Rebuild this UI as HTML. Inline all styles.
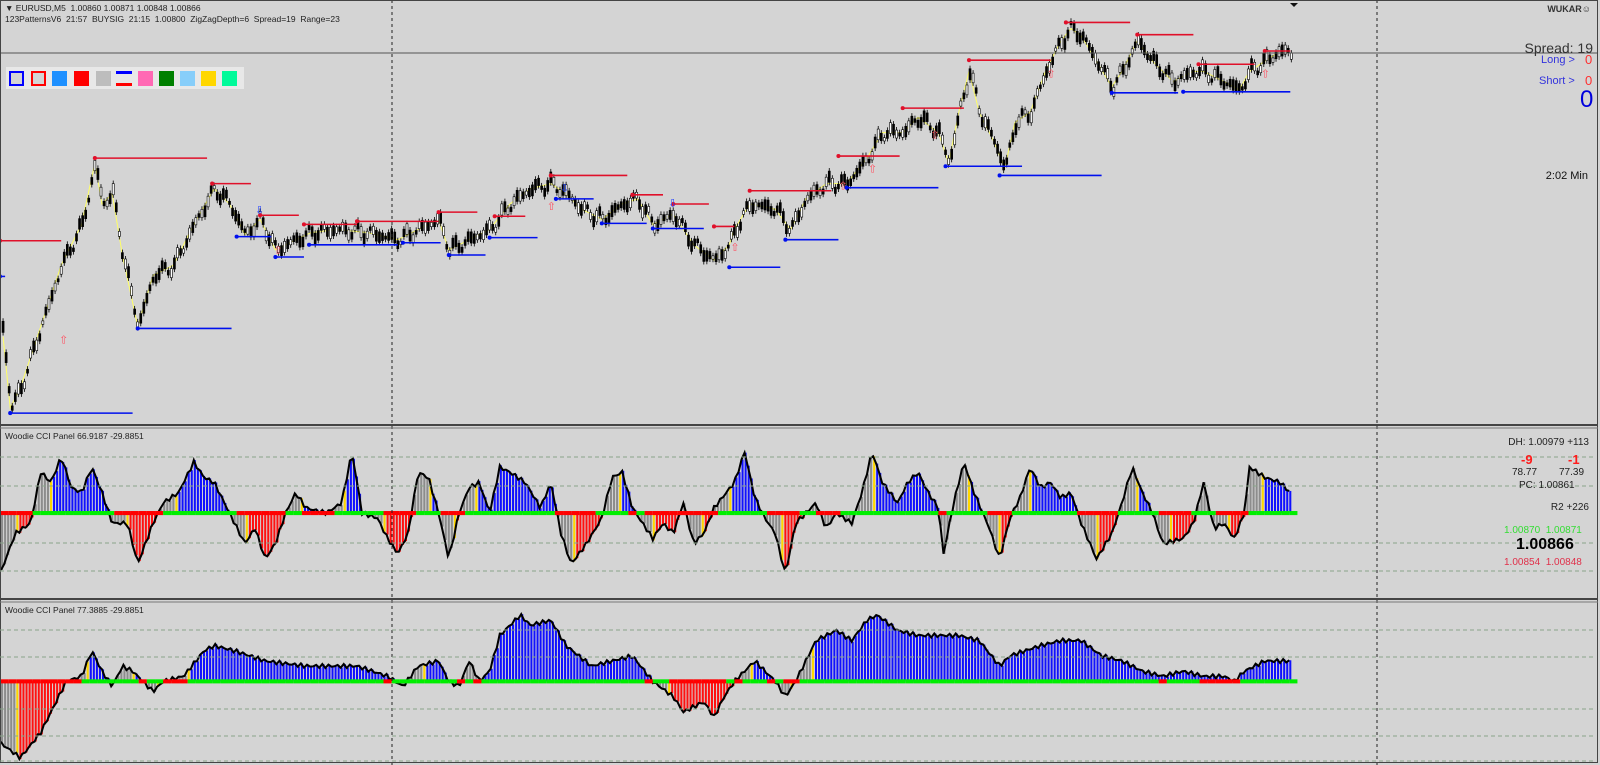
<!DOCTYPE html>
<html><head><meta charset="utf-8"><style>
html,body{margin:0;padding:0;background:#d4d4d4;width:1600px;height:765px;overflow:hidden;font-family:"Liberation Sans",sans-serif}
.t{position:absolute;white-space:nowrap;font-size:9px;color:#222}
</style></head><body>
<svg id="s" width="1600" height="765" style="position:absolute;left:0;top:0">
<rect x="0" y="0" width="1600" height="765" fill="#d4d4d4"/>
<g id="g" transform="scale(1.02)"></g>
<line x1="0" y1="53" x2="1598" y2="53" stroke="#555" stroke-width="1"/>
<line x1="392" y1="0" x2="392" y2="765" stroke="#222" stroke-dasharray="3,3"/>
<line x1="1377" y1="0" x2="1377" y2="765" stroke="#222" stroke-dasharray="3,3"/>
<rect x="0.5" y="0.5" width="1597" height="762" fill="none" stroke="#444"/>
<line x1="0" y1="425" x2="1598" y2="425" stroke="#444" stroke-width="2"/>
<line x1="0" y1="428" x2="1598" y2="428" stroke="#777" stroke-width="1"/>
<line x1="0" y1="599" x2="1598" y2="599" stroke="#444" stroke-width="2"/>
<line x1="0" y1="602" x2="1598" y2="602" stroke="#777" stroke-width="1"/>
<path d="M1290 3 l8 0 l-4 4z" fill="#111"/>
<rect x="6" y="67" width="238" height="22" fill="#e8e8e8"/>
<rect x="10" y="72" width="13" height="13" fill="#d4d4d4" stroke="#0000ff" stroke-width="2"/>
<rect x="32" y="72" width="13" height="13" fill="#d4d4d4" stroke="#ff0000" stroke-width="2"/>
<rect x="52" y="71" width="15" height="15" fill="#1e90ff"/>
<rect x="74" y="71" width="15" height="15" fill="#ff0000"/>
<rect x="96" y="71" width="15" height="15" fill="#bdbdbd"/>
<rect x="116" y="71" width="16" height="3" fill="#0000ff"/>
<rect x="116" y="83" width="16" height="3" fill="#ff0000"/>
<rect x="138" y="71" width="15" height="15" fill="#ff69b4"/>
<rect x="159" y="71" width="15" height="15" fill="#008000"/>
<rect x="180" y="71" width="15" height="15" fill="#87cefa"/>
<rect x="201" y="71" width="15" height="15" fill="#ffd700"/>
<rect x="222" y="71" width="15" height="15" fill="#00fa9a"/>
</svg>
<div class="t" style="left:5px;top:3px;font-size:8.5px">&#9660; EURUSD,M5 &nbsp;1.00860 1.00871 1.00848 1.00866</div>
<div class="t" style="left:5px;top:14px;font-size:8.5px">123PatternsV6 &nbsp;21:57 &nbsp;BUYSIG &nbsp;21:15 &nbsp;1.00800 &nbsp;ZigZagDepth=6 &nbsp;Spread=19 &nbsp;Range=23</div>
<div class="t" style="left:5px;top:431px;font-size:8.5px">Woodie CCI Panel 66.9187 -29.8851</div>
<div class="t" style="left:5px;top:605px;font-size:8.5px">Woodie CCI Panel 77.3885 -29.8851</div>
<div class="t" style="right:9px;top:4px;font-weight:bold;color:#333">WUKAR&#9786;</div>
<div class="t" style="right:7px;top:40px;font-size:14px;color:#333">Spread: 19</div>
<div class="t" style="left:1541px;top:54px;font-size:11px;color:#3333dd">Long &gt;</div>
<div class="t" style="left:1585px;top:52px;font-size:13px;color:#ff3030">0</div>
<div class="t" style="left:1539px;top:75px;font-size:11px;color:#3333dd">Short &gt;</div>
<div class="t" style="left:1585px;top:73px;font-size:13px;color:#ff3030">0</div>
<div class="t" style="left:1580px;top:86px;font-size:24px;color:#0000dd">0</div>
<div class="t" style="right:12px;top:170px;font-size:11px;color:#111">2:02 Min</div>
<div class="t" style="right:11px;top:437px;font-size:10px;color:#222">DH: 1.00979 +113</div>
<div class="t" style="left:1521px;top:452px;font-size:13px;font-weight:bold;color:#ff1a1a">-9</div>
<div class="t" style="left:1568px;top:452px;font-size:13px;font-weight:bold;color:#ff1a1a">-1</div>
<div class="t" style="left:1512px;top:467px;font-size:10px">78.77</div>
<div class="t" style="left:1559px;top:467px;font-size:10px">77.39</div>
<div class="t" style="left:1519px;top:480px;font-size:10px">PC: 1.00861</div>
<div class="t" style="right:11px;top:502px;font-size:10px">R2 +226</div>
<div class="t" style="left:1504px;top:525px;font-size:10px;color:#33dd33">1.00870 &nbsp;1.00871</div>
<div class="t" style="left:1516px;top:536px;font-size:16px;font-weight:bold;color:#000">1.00866</div>
<div class="t" style="left:1504px;top:557px;font-size:10px;color:#e0304a">1.00854 &nbsp;1.00848</div>
<script>
var NS="http://www.w3.org/2000/svg",g=document.getElementById('g'),s=document.getElementById('s');
function el(p,t,a){var e=document.createElementNS(NS,t);for(var k in a)e.setAttribute(k,a[k]);p.appendChild(e);return e;}
function interp(pts,x){for(var i=1;i<pts.length;i++){if(x<=pts[i][0]){var a=pts[i-1],b=pts[i];return a[1]+(b[1]-a[1])*(x-a[0])/(b[0]-a[0]);}}return pts[pts.length-1][1];}
[457,486,543,571,630,657,709,736,761].forEach(function(y){el(s,'line',{x1:0,y1:y,x2:1596,y2:y,stroke:'#8aa58a','stroke-dasharray':'4,3'});});
function panel(base,pts){
 var prev=0,cnt=0,line=[];
 for(var x=1;x<=1265;x+=3){
  var v=interp(pts,x)+Math.sin(x*0.9)*2;
  var sg=v>=0?1:-1; if(sg!=prev){cnt=0;prev=sg;} cnt++;
  var c=sg>0?'#1010ff':'#ff1010'; if(cnt<=5)c='#8c8c8c'; else if(cnt==6)c='#ffd700';
  el(g,'rect',{x:x,y:Math.min(base,base-v),width:2,height:Math.abs(v),fill:c});
  line.push(x+','+(base-v));
 }
 el(g,'polyline',{points:line.join(' '),fill:'none',stroke:'#000','stroke-width':2});
 for(var x=0;x<1265;x+=8){var v=interp(pts,x+4);el(g,'rect',{x:x,y:base-2,width:8,height:4,fill:(v>5||(v<0&&v>-10))?'#00ee00':'#ff0000'});}
}
panel(503,[[0,-60],[15,-20],[30,-10],[40,40],[50,30],[60,55],[70,25],[80,20],[90,45],[100,20],[110,-10],[125,-10],[135,-50],[150,-10],[160,10],[175,20],[190,50],[200,35],[210,30],[220,10],[230,-10],[240,-30],[250,-15],[260,-45],[270,-30],[280,0],[290,20],[300,5],[320,0],[335,10],[345,60],[355,0],[370,-5],[380,-25],[390,-40],[400,-20],[410,40],[420,35],[430,0],[440,-45],[450,0],[460,25],[470,30],[480,0],[490,45],[500,40],[515,30],[530,5],[540,30],[550,-20],[560,-50],[575,-30],[590,-5],[600,35],[610,40],[620,5],[640,-25],[650,-10],[660,-20],[670,10],[680,-30],[690,-20],[700,5],[720,30],[730,60],[740,15],[750,-5],[760,-20],[770,-60],[780,-10],[800,10],[810,-15],[820,0],[835,-10],[845,20],[855,60],[865,30],[880,10],[890,30],[900,40],[910,20],[920,5],[925,-40],[935,10],[945,50],[955,20],[970,-15],[980,-45],[990,-5],[1000,15],[1010,45],[1020,25],[1030,30],[1040,15],[1050,20],[1060,-10],[1075,-45],[1090,-20],[1100,10],[1110,45],[1120,20],[1130,0],[1140,-30],[1160,-25],[1170,-10],[1180,30],[1190,-15],[1200,-10],[1210,-25],[1220,0],[1225,45],[1240,35],[1255,30],[1265,20]]);
panel(668,[[0,-60],[20,-75],[40,-50],[55,-20],[65,0],[80,5],[90,30],[100,10],[110,-5],[120,15],[130,10],[140,0],[150,-10],[160,0],[180,5],[200,30],[210,35],[230,30],[260,20],[300,15],[350,15],[380,5],[395,-5],[410,15],[430,20],[440,0],[450,-5],[460,20],[470,0],[480,10],[490,45],[510,65],[520,55],[540,60],[555,35],[580,15],[600,20],[620,25],[640,0],[660,-15],[670,-30],[690,-20],[700,-35],[710,-15],[720,0],[740,20],[760,0],[770,-15],[780,0],[800,40],[820,50],[835,40],[850,60],[860,65],[880,50],[900,45],[920,45],[940,45],[960,40],[980,15],[990,25],[1020,35],[1040,40],[1060,40],[1080,25],[1100,20],[1120,10],[1140,5],[1160,10],[1180,5],[1200,5],[1210,0],[1220,10],[1240,20],[1265,20]]);
var P=[[3,330],[10,400],[20,380],[40,320],[60,260],[80,220],[93,160],[100,200],[110,190],[120,250],[135,320],[150,270],[170,260],[190,220],[210,185],[225,200],[240,230],[255,215],[270,245],[290,235],[305,228],[330,225],[360,228],[390,235],[410,225],[430,215],[440,245],[460,235],[480,225],[500,200],[520,185],[540,180],[555,190],[570,205],[590,215],[610,200],[625,195],[640,220],[660,210],[680,240],[700,255],[715,240],[720,225],[735,200],[760,205],[775,225],[790,195],[810,180],[830,180],[850,155],[865,130],[885,130],[900,115],[920,130],[930,160],[940,110],[950,70],[960,110],[975,140],[985,165],[995,120],[1010,110],[1025,70],[1040,40],[1050,28],[1060,35],[1075,60],[1090,85],[1100,70],[1115,40],[1130,60],[1150,80],[1170,70],[1180,70],[1200,80],[1215,88],[1225,70],[1240,60],[1255,50],[1265,52]];
el(g,'polyline',{points:P.map(function(p){return p.join(',')}).join(' '),fill:'none',stroke:'#ffff66','stroke-width':1});
for(var x=2;x<=1265;x+=3){var y=interp(P,x)+Math.sin(x*1.7)*4+Math.cos(x*0.53)*3;var h=3+Math.abs(Math.sin(x*2.3))*8;
 el(g,'line',{x1:x+1,y1:y-h/2-3,x2:x+1,y2:y+h/2+3,stroke:'#000','stroke-width':0.8});
 el(g,'rect',{x:x,y:y-h/2,width:2,height:h,fill:(Math.sin(x*3.1)>0.5?'#fff':'#000'),stroke:'#000','stroke-width':0.6});}
var R=[[0,236,60],[93,155,203],[208,180,246],[255,211,293],[298,220,350],[350,217,430],[430,208,468],[485,212,515],[540,172,615],[620,191,650],[660,200,695],[700,222,720],[735,187,815],[822,153,882],[885,106,945],[950,59,1030],[1045,22,1108],[1115,34,1170],[1175,63,1230],[1240,50,1265]];
var B=[[10,405,130],[135,322,227],[232,232,266],[270,252,298],[303,240,390],[395,238,432],[440,250,476],[480,233,527],[545,195,582],[590,219,634],[640,224,690],[715,262,765],[770,235,822],[830,184,920],[927,163,1002],[980,172,1080],[1090,91,1155],[1160,90,1265],[0,271,5]];
R.forEach(function(r){el(g,'line',{x1:r[0],y1:r[1],x2:r[2],y2:r[1],stroke:'#e0102a','stroke-width':1.5});el(g,'circle',{cx:r[0],cy:r[1],r:2,fill:'#e0102a'});});
B.forEach(function(r){el(g,'line',{x1:r[0],y1:r[1],x2:r[2],y2:r[1],stroke:'#0010ee','stroke-width':1.5});el(g,'circle',{cx:r[0],cy:r[1],r:2,fill:'#0010ee'});});
[[62,333],[272,245],[540,202],[720,242],[826,182],[855,165],[916,132],[1030,72],[1240,72]].forEach(function(a){var t=el(g,'text',{x:a[0]-4,y:a[1]+4,fill:'#ff5060','font-size':'11','font-family':'Liberation Sans'});t.textContent='⇧';});
[[254,206],[553,184],[659,199]].forEach(function(a){var t=el(g,'text',{x:a[0]-4,y:a[1]+4,fill:'#2040ff','font-size':'11','font-family':'Liberation Sans'});t.textContent='⇩';});
</script>
</body></html>
